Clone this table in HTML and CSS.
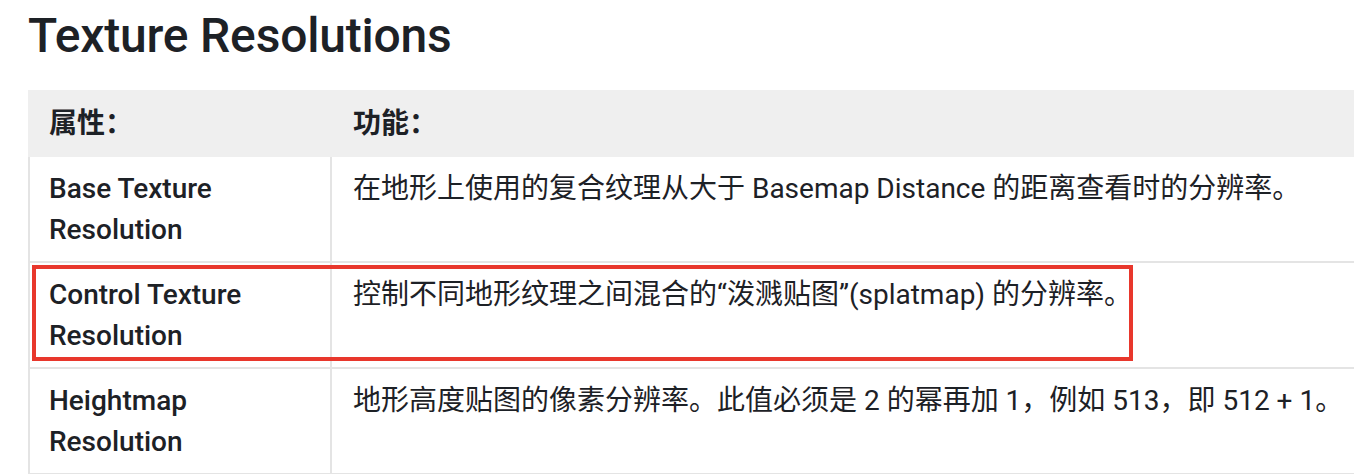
FILE: index.html
```html
<!DOCTYPE html>
<html lang="zh-CN">
<head>
<meta charset="utf-8">
<title>Texture Resolutions</title>
<link rel="stylesheet" href="styles.css">
</head>
<body>
<main class="page">
  <h1 class="title">Texture Resolutions</h1>
  <div class="table-wrap">
    <table class="props">
      <colgroup>
        <col class="col-prop">
        <col class="col-func">
      </colgroup>
      <thead>
        <tr>
          <th class="cell-prop">属性：</th>
          <th class="cell-func">功能：</th>
        </tr>
      </thead>
      <tbody>
        <tr>
          <td class="cell-prop">Base Texture Resolution</td>
          <td class="cell-func">在地形上使用的复合纹理从大于 Basemap Distance 的距离查看时的分辨率。</td>
        </tr>
        <tr>
          <td class="cell-prop">Control Texture Resolution</td>
          <td class="cell-func">控制不同地形纹理之间混合的“泼溅贴图”(splatmap) 的分辨率。</td>
        </tr>
        <tr>
          <td class="cell-prop">Heightmap Resolution</td>
          <td class="cell-func">地形高度贴图的像素分辨率。此值必须是 2 的幂再加 1，例如 513，即 512 + 1。</td>
        </tr>
      </tbody>
    </table>
    <div class="highlight"></div>
  </div>
</main>
</body>
</html>
```

FILE: styles.css
```css
html, body {
  margin: 0;
  padding: 0;
  overflow: hidden;
  background: #ffffff;
}

body {
  font-family: Roboto, "Noto Sans CJK SC", sans-serif;
  color: #1d2126;
}

.page {
  padding: 8px 0 0 28px;
}

.title {
  margin: 0 0 26px 0;
  font-size: 48px;
  line-height: 56px;
  font-weight: 500;
  letter-spacing: -0.2px;
  color: #1d2126;
}

.table-wrap {
  position: relative;
  width: 1360px;
}

.props {
  border-collapse: collapse;
  table-layout: fixed;
  width: 1360px;
  font-size: 28px;
  line-height: 41px;
}

.col-prop {
  width: 302px;
}

.props th,
.props td {
  border: 2px solid #e4e4e4;
  padding: 11px 20px 11px 20px;
  text-align: left;
  vertical-align: top;
}

.props th {
  background: #efefef;
  border-color: #efefef;
  font-weight: 600;
}

.props td.cell-prop {
  font-weight: 500;
  padding-left: 19px;
}

.props th.cell-prop {
  padding-left: 19px;
}

.props td.cell-func {
  font-weight: 400;
  padding-left: 21px;
}

.props th.cell-func {
  padding-left: 21px;
}

.props tbody tr:first-child td {
  border-top-color: #efefef;
}

.highlight {
  position: absolute;
  left: 4px;
  top: 175px;
  width: 1101px;
  height: 96px;
  box-sizing: border-box;
  border: 4px solid #e8372c;
  pointer-events: none;
}
```
